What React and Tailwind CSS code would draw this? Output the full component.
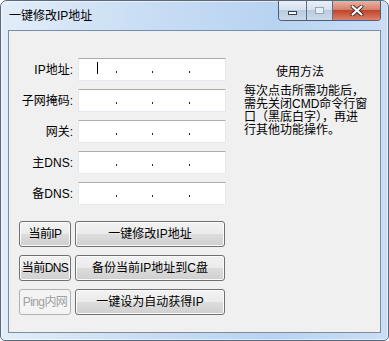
import React from 'react';

const labels = ['IP地址:', '子网掩码:', '网关:', '主DNS:', '备DNS:'];

function IpBox({ caret }) {
  return (
    <div className="relative flex h-[23px] w-[148px] items-start border border-[#e3e9ef] border-t-[#abadb3] bg-white pt-[12px]">
      {caret && <span className="absolute left-[18px] top-[3px] h-[12px] w-px bg-black" />}
      <span className="ml-[37px] h-[2px] w-px bg-[#22224a]" />
      <span className="ml-[35px] h-[2px] w-px bg-[#22224a]" />
      <span className="ml-[36px] h-[2px] w-px bg-[#22224a]" />
    </div>
  );
}

function Btn({ children, wide, disabled }) {
  return (
    <button
      className={
        disabled
          ? 'flex h-[26px] w-[52px] items-center justify-center whitespace-nowrap rounded-[3px] border border-[#adb2b5] bg-[#f4f4f4] text-[12px] leading-[12px] tracking-[-0.6px] text-[#a0a0a0]'
          : wide
          ? 'flex h-[26px] w-[150px] items-center justify-center whitespace-nowrap rounded-[3px] border border-[#707070] bg-[linear-gradient(#f2f2f2,#ebebeb_50%,#dddddd_50%,#cfcfcf)] text-[12px] leading-[12px] text-black shadow-[inset_0_0_0_1px_#fbfbfb]'
          : 'flex h-[26px] w-[52px] items-center justify-center whitespace-nowrap rounded-[3px] border border-[#707070] bg-[linear-gradient(#f2f2f2,#ebebeb_50%,#dddddd_50%,#cfcfcf)] text-[12px] leading-[12px] tracking-[-0.6px] text-black shadow-[inset_0_0_0_1px_#fbfbfb]'
      }
    >
      {children}
    </button>
  );
}

export default function App() {
  return (
    <div className="relative flex h-[341px] w-[389px] flex-col rounded-t-[7px] rounded-b-[5px] border border-[#5a687c] bg-[linear-gradient(90deg,#e2edf9,#cadef4_35%,#b8d3f1_70%,#cadef5)] px-[7px] pb-[7px] font-['Liberation_Sans','Noto_Sans_CJK_SC',sans-serif] shadow-[inset_0_0_0_1px_rgba(255,255,255,0.55)]">
      {/* title bar */}
      <div className="flex h-[29px] items-center pl-px text-[12px] leading-[12px] text-black">
        一键修改IP地址
      </div>

      {/* caption buttons */}
      <div className="absolute right-[7px] top-0 flex h-[20px] overflow-hidden rounded-b-[4px] border border-t-0 border-[#4f5e74]">
        <div className="flex w-[28px] items-center justify-center border-r border-[#5d6d84] bg-[linear-gradient(#e8eff8,#d6e2f0_45%,#b9cbe0_50%,#cbdaeb)] pt-[4px]">
          <span className="h-[4px] w-[9px] border border-[#3a4250] bg-white" />
        </div>
        <div className="flex w-[26px] items-center justify-center border-r border-[#5d6d84] bg-[linear-gradient(#e8eff8,#d6e2f0_45%,#b9cbe0_50%,#cbdaeb)]">
          <span className="h-[7px] w-[9px] border border-[#9aa6b6] bg-[#e6edf6]" />
        </div>
        <div className="flex w-[47px] items-center justify-center bg-[linear-gradient(#eab2a3,#d7806b_45%,#c2432b_50%,#d6836b)]">
          <svg width="14" height="11" viewBox="0 0 14 11">
            <path d="M2.5 1.5 L11.5 9.5 M11.5 1.5 L2.5 9.5" stroke="#4a2a26" strokeWidth="4" strokeLinecap="round" fill="none" />
            <path d="M2.5 1.5 L11.5 9.5 M11.5 1.5 L2.5 9.5" stroke="#ffffff" strokeWidth="2.2" strokeLinecap="round" fill="none" />
          </svg>
        </div>
      </div>

      {/* client area */}
      <div className="flex flex-1 flex-col border border-[#7d8ca0] bg-[#f0f0f0] pt-[27px] text-[12px] leading-[12px] text-black">
        <div className="flex">
          <div className="flex flex-col gap-[8px] pl-[11px]">
            {labels.map((l, i) => (
              <div key={l} className="flex items-center gap-[5px]">
                <span className="w-[53px] whitespace-nowrap text-right">{l}</span>
                <IpBox caret={i === 0} />
              </div>
            ))}
          </div>
          <div className="ml-[18px] flex flex-col pt-[8px]">
            <div className="pl-[32px]">使用方法</div>
            <div className="mt-[7px] whitespace-nowrap leading-[13px]">
              <div>每次点击所需功能后，</div>
              <div>需先关闭CMD命令行窗</div>
              <div>口（黑底白字），再进</div>
              <div>行其他功能操作。</div>
            </div>
          </div>
        </div>

        <div className="mt-[16px] flex flex-col gap-[8px] pl-[10px]">
          <div className="flex gap-[4px]">
            <Btn>当前IP</Btn>
            <Btn wide>一键修改IP地址</Btn>
          </div>
          <div className="flex gap-[4px]">
            <Btn>当前DNS</Btn>
            <Btn wide>备份当前IP地址到C盘</Btn>
          </div>
          <div className="flex gap-[4px]">
            <Btn disabled>Ping内网</Btn>
            <Btn wide>一键设为自动获得IP</Btn>
          </div>
        </div>
      </div>
    </div>
  );
}
